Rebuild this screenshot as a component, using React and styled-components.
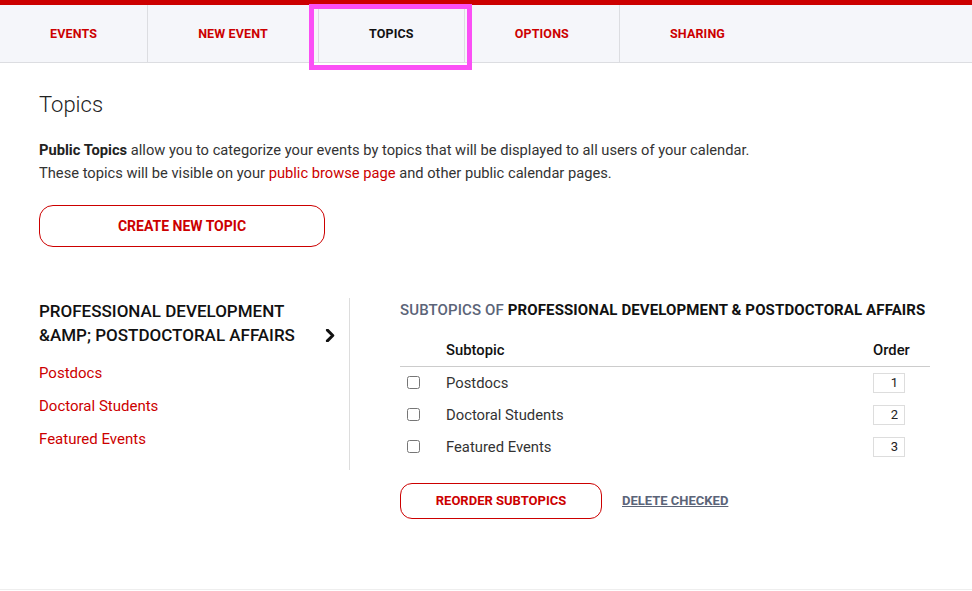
import { createGlobalStyle, styled } from "styled-components";

const GlobalStyle = createGlobalStyle`
    * {
        box-sizing: border-box;
    }

    body {
        margin: 0;
        background: #ffffff;
        color: #333333;
        font-family: Roboto, "Liberation Sans", Arial, sans-serif;
    }
`;

const tabs = ["Events", "New Event", "Topics", "Options", "Sharing"];

const subtopics = [
    { name: "Postdocs", order: 1 },
    { name: "Doctoral Students", order: 2 },
    { name: "Featured Events", order: 3 },
];

export default function App() {
    return (
        <Page>
            <GlobalStyle />
            <TopBar />
            <Nav>
                {tabs.map((tab) => (
                    <Tab key={tab} $active={tab === "Topics"}>
                        {tab}
                        {tab === "Topics" && <Highlight />}
                    </Tab>
                ))}
            </Nav>

            <Main>
                <Title>Topics</Title>
                <Intro>
                    <strong>Public Topics</strong> allow you to categorize your
                    events by topics that will be displayed to all users of your
                    calendar.
                    <br />
                    These topics will be visible on your{" "}
                    <a href="#">public browse page</a> and other public calendar
                    pages.
                </Intro>
                <OutlineButton
                    $width="286px"
                    $height="42px"
                    $radius="14px"
                    $size="14px">
                    Create New Topic
                </OutlineButton>

                <Section>
                    <TopicColumn>
                        <TopicHeading>
                            <span>
                                Professional Development
                                <br />
                                &amp;AMP; Postdoctoral Affairs
                            </span>
                            <Chevron viewBox="0 0 10 14">
                                <path
                                    d="M2.2 1.2 L8 7 L2.2 12.8"
                                    fill="none"
                                    stroke="#111"
                                    strokeWidth="3.2"
                                    strokeLinecap="round"
                                    strokeLinejoin="round"
                                />
                            </Chevron>
                        </TopicHeading>
                        <TopicList>
                            {subtopics.map((s) => (
                                <li key={s.name}>
                                    <a href="#">{s.name}</a>
                                </li>
                            ))}
                        </TopicList>
                    </TopicColumn>

                    <SubColumn>
                        <SubHeading>
                            <span>Subtopics of </span>
                            Professional Development &amp; Postdoctoral Affairs
                        </SubHeading>
                        <Table>
                            <thead>
                                <tr>
                                    <th className="check"></th>
                                    <th>Subtopic</th>
                                    <th className="order">Order</th>
                                </tr>
                            </thead>
                            <tbody>
                                {subtopics.map((s) => (
                                    <tr key={s.name}>
                                        <td className="check">
                                            <input type="checkbox" />
                                        </td>
                                        <td>{s.name}</td>
                                        <td className="order">
                                            <OrderInput
                                                type="text"
                                                defaultValue={s.order}
                                            />
                                        </td>
                                    </tr>
                                ))}
                            </tbody>
                        </Table>
                        <Actions>
                            <OutlineButton
                                $width="202px"
                                $height="36px"
                                $radius="12px"
                                $size="13px">
                                Reorder Subtopics
                            </OutlineButton>
                            <TextLink href="#">Delete Checked</TextLink>
                        </Actions>
                    </SubColumn>
                </Section>
            </Main>
            <Footer />
        </Page>
    );
}

const Page = styled.div`
    width: 100%;
`;

const TopBar = styled.div`
    height: 5px;
    background: #cc0000;
`;

const Nav = styled.nav`
    display: flex;
    height: 58px;
    background: #f5f6fa;
    border-bottom: 1px solid #dcdde1;
`;

const Tab = styled.div`
    position: relative;
    display: flex;
    align-items: center;
    justify-content: center;
    padding: 0 50px 1px;
    border-right: 1px solid #dcdde1;
    font-size: 12.5px;
    font-weight: 700;
    letter-spacing: 0.15px;
    text-transform: uppercase;
    color: ${(p) => (p.$active ? "#111111" : "#cc0000")};

    &:last-child {
        border-right: none;
    }
`;

const Highlight = styled.span`
    position: absolute;
    top: -1px;
    left: -10px;
    right: -8px;
    bottom: -8px;
    border: 5px solid #fb4ff5;
    pointer-events: none;
`;

const Main = styled.main`
    padding: 28px 42px 0 39px;
`;

const Title = styled.h1`
    margin: 0 0 20px;
    font-size: 22px;
    line-height: 28px;
    font-weight: 300;
    color: #222222;
`;

const Intro = styled.p`
    margin: 0 0 20px;
    font-size: 14.7px;
    line-height: 23px;
    color: #333333;

    strong {
        font-weight: 700;
        color: #222222;
    }

    a {
        color: #cc0000;
        text-decoration: none;
    }
`;

const OutlineButton = styled.button`
    display: flex;
    align-items: center;
    justify-content: center;
    width: ${(p) => p.$width};
    height: ${(p) => p.$height};
    border: 1px solid #cc0000;
    border-radius: ${(p) => p.$radius};
    background: #ffffff;
    color: #cc0000;
    font-family: inherit;
    font-size: ${(p) => p.$size};
    font-weight: 700;
    text-transform: uppercase;
    cursor: pointer;
`;

const Section = styled.section`
    display: grid;
    grid-template-columns: 311px 1fr;
    column-gap: 50px;
    margin-top: 51px;
    align-items: start;
`;

const TopicColumn = styled.div`
    border-right: 1px solid #dddddd;
    padding: 1px 14px 21px 0;
`;

const TopicHeading = styled.h2`
    display: flex;
    align-items: flex-end;
    justify-content: space-between;
    margin: 0;
    font-size: 17px;
    line-height: 24px;
    font-weight: 500;
    text-transform: uppercase;
    color: #111111;
`;

const Chevron = styled.svg`
    width: 10px;
    height: 13px;
    margin-bottom: 5px;
`;

const TopicList = styled.ul`
    list-style: none;
    margin: 16px 0 0;
    padding: 0;

    li {
        font-size: 15px;
        line-height: 20px;
        margin-bottom: 13px;
    }

    li:last-child {
        margin-bottom: 0;
    }

    a {
        color: #cc0000;
        text-decoration: none;
    }
`;

const SubColumn = styled.div`
    padding-top: 2px;
    min-width: 0;
`;

const SubHeading = styled.h3`
    margin: 0 0 12px;
    font-size: 15px;
    line-height: 20px;
    font-weight: 700;
    letter-spacing: 0.12px;
    white-space: nowrap;
    text-transform: uppercase;
    color: #111111;

    span {
        font-weight: 500;
        color: #5b6478;
    }
`;

const Table = styled.table`
    width: 100%;
    border-collapse: collapse;
    font-size: 14.8px;

    th {
        padding: 8px 0 6px;
        line-height: 20px;
        text-align: left;
        font-weight: 500;
        color: #111111;
        border-bottom: 1px solid #cccccc;
    }

    td {
        height: 32px;
        padding: 0;
        color: #333333;
        vertical-align: middle;
    }

    .check {
        width: 46px;
        padding-left: 7px;
    }

    .check input {
        display: block;
        margin: 0;
        width: 13px;
        height: 13px;
    }

    .order {
        width: 57px;
    }
`;

const OrderInput = styled.input`
    display: block;
    width: 32px;
    height: 20px;
    padding: 0 6px;
    border: 1px solid #dddddd;
    font-family: inherit;
    font-size: 13px;
    text-align: right;
    color: #222222;
`;

const Actions = styled.div`
    display: flex;
    align-items: center;
    gap: 20px;
    margin-top: 20px;
`;

const TextLink = styled.a`
    font-size: 13px;
    font-weight: 700;
    text-transform: uppercase;
    color: #5b6478;
    text-decoration: underline;
`;

const Footer = styled.footer`
    margin-top: 70px;
    height: 40px;
    border-top: 1px solid #eeeeee;
`;
